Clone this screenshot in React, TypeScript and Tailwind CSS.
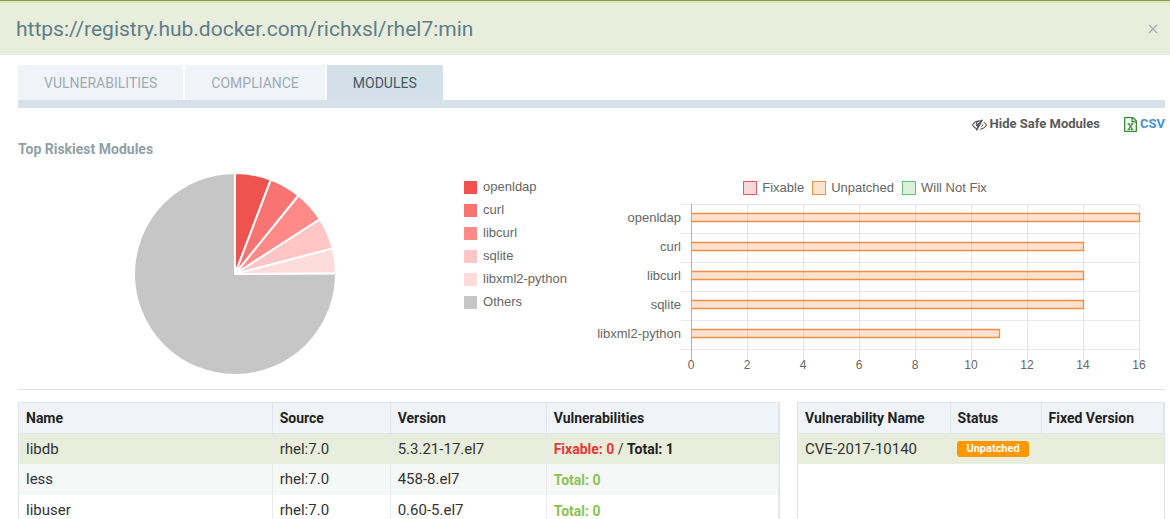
import { useState } from "react";

type Slice = { label: string; value: number; color: string };
type ModuleRow = { name: string; source: string; version: string; fixable: number; total: number };

const tabs = ["VULNERABILITIES", "COMPLIANCE", "MODULES"];

const slices: Slice[] = [
  { label: "openldap", value: 16, color: "#ef5350" },
  { label: "curl", value: 14, color: "#f77472" },
  { label: "libcurl", value: 14, color: "#ff8a87" },
  { label: "sqlite", value: 14, color: "#ffc6c5" },
  { label: "libxml2-python", value: 11, color: "#ffdcdc" },
  { label: "Others", value: 208, color: "#c6c6c6" },
];

const barLegend = [
  { label: "Fixable", box: "border-[#dc5e60] bg-[#f8d7d8]" },
  { label: "Unpatched", box: "border-[#f0914a] bg-[#fde2cf]" },
  { label: "Will Not Fix", box: "border-[#6cbf73] bg-[#daf0db]" },
];

const modules: ModuleRow[] = [
  { name: "libdb", source: "rhel:7.0", version: "5.3.21-17.el7", fixable: 0, total: 1 },
  { name: "less", source: "rhel:7.0", version: "458-8.el7", fixable: 0, total: 0 },
  { name: "libuser", source: "rhel:7.0", version: "0.60-5.el7", fixable: 0, total: 0 },
];

function EyeSlashIcon() {
  return (
    <svg viewBox="0 0 1792 1792" className="size-[15px]" fill="currentColor" aria-hidden="true">
      <path d="M555 1335l78-141q-87-63-136-159t-49-203q0-121 61-225-229 117-381 353 167 258 427 375zm389-759q0-20-14-34t-34-14q-125 0-214.5 89.5t-89.5 214.5q0 20 14 34t34 14 34-14 14-34q0-86 61-147t147-61q20 0 34-14t14-34zm363-191q0 7-1 9-106 189-316 567t-315 566l-49 89q-10 16-28 16-12 0-134-70-16-10-16-28 0-12 44-87-143-65-263.5-173t-208.5-245q-20-31-20-69t20-69q153-235 380-371t496-136q89 0 180 17l54-97q10-16 28-16 5 0 18 6t31 15.5 33 18.5 31.5 18.5 19.5 11.5q16 10 16 27zm37 447q0 139-79 253.5t-209 164.5l280-502q8 45 8 84zm448 128q0 35-20 69-39 64-109 145-150 172-347.5 267t-419.5 95l74-132q212-18 392.5-137t301.5-307q-115-179-282-294l63-112q95 64 182.5 153t144.5 184q20 34 20 69z" />
    </svg>
  );
}

function ExcelIcon() {
  return (
    <svg viewBox="128 0 1536 1792" className="h-[15px] w-[13px]" fill="currentColor" stroke="currentColor" strokeWidth="40" aria-hidden="true">
      <path d="M1596 380q28 28 48 76t20 88v1152q0 40-28 68t-68 28h-1344q-40 0-68-28t-28-68v-1600q0-40 28-68t68-28h896q40 0 88 20t76 48zm-444-244v376h376q-10-29-22-41l-313-313q-12-12-41-22zm384 1528v-1024h-416q-40 0-68-28t-28-68v-416h-768v1536h1280zm-979-234v106h281v-106h-75l103-161q5-7 10-16.5t7.5-13.5 3.5-4h2q1 4 5 10 2 4 4.5 7.5t6 8 6.5 8.5l107 161h-76v106h291v-106h-68l-192-273 195-282h67v-107h-279v107h74l-103 159q-4 7-10 16.5t-9 13.5l-2 3h-2q-1-4-5-10-6-11-17-23l-106-159h76v-107h-290v107h68l189 272-194 283h-68z" />
    </svg>
  );
}

function PieChart() {
  const total = slices.reduce((sum, s) => sum + s.value, 0);
  const point = (v: number) => {
    const angle = (v / total) * Math.PI * 2;
    return `${101 + 101 * Math.sin(angle)} ${101 - 101 * Math.cos(angle)}`;
  };
  let start = 0;

  return (
    <svg viewBox="0 0 202 202" className="size-[202px] shrink-0" role="img" aria-label="Top Riskiest Modules">
      {slices.map((s) => {
        const from = start;
        start += s.value;
        const large = s.value > total / 2 ? 1 : 0;
        return (
          <path
            key={s.label}
            d={`M101 101L${point(from)}A101 101 0 ${large} 1 ${point(start)}Z`}
            fill={s.color}
            stroke="#fff"
            strokeWidth="2"
          />
        );
      })}
    </svg>
  );
}

function BarChart() {
  const bars = slices.slice(0, 5);
  const ticks = [0, 2, 4, 6, 8, 10, 12, 14, 16];

  return (
    <svg viewBox="0 0 556 172" className="h-[172px] w-[556px]" fontSize="13" fill="#666">
      {[0, 1, 2, 3, 4, 5].map((i) => (
        <path key={i} d={`M88 ${1.5 + i * 29}H547`} stroke="#e8e8e8" />
      ))}
      {ticks.map((t) => (
        <g key={t}>
          <path d={`M${98.5 + t * 28} 1V157`} stroke={t === 0 ? "#b0b0b0" : "#e5e5e5"} />
          <text x={98 + t * 28} y="166" textAnchor="middle" fontSize="12">
            {t}
          </text>
        </g>
      ))}
      {bars.map((b, i) => (
        <g key={b.label}>
          <text x="88" y={19 + i * 29} textAnchor="end">
            {b.label}
          </text>
          <path
            d={`M98.5 ${10.5 + i * 29}h${b.value * 28}v8h-${b.value * 28}`}
            fill="#ff8c3c"
            fillOpacity="0.25"
            stroke="#ee8f49"
            strokeWidth="1.3"
          />
        </g>
      ))}
    </svg>
  );
}

export default function App() {
  const [activeTab, setActiveTab] = useState("MODULES");
  const [hideSafe, setHideSafe] = useState(false);
  const [selected, setSelected] = useState("libdb");

  const rows = hideSafe ? modules.filter((m) => m.total > 0) : modules;
  const th = "border-r border-b border-[#dfe5e9] px-[7px] text-left text-sm font-bold";
  const td = "border-r border-[#e6eaec] px-[7px]";

  return (
    <div className="flex h-screen flex-col overflow-hidden bg-white font-['Roboto',sans-serif] text-[15px] text-[#333]">
      <header className="flex h-[55px] shrink-0 items-center justify-between border-t border-[#89956b] bg-[#e9eedc] pt-[2px] pr-3 pl-4 shadow-[inset_0_2px_0_#dce8a8]">
        <h1 className="pt-[2px] text-[21px] text-[#607d8b]">https://registry.hub.docker.com/richxsl/rhel7:min</h1>
        <button aria-label="Close" className="flex h-5 w-[10px] items-center justify-center text-[#a3adb5]">
          <svg viewBox="0 0 10 10" className="size-[10px]" stroke="currentColor" strokeWidth="1.2">
            <path d="M1 1L9 9M9 1L1 9" />
          </svg>
        </button>
      </header>

      <main className="flex min-h-0 flex-1 flex-col pt-[10px] pr-[5px] pl-[18px]">
        <nav className="flex gap-[2px] border-b-8 border-[#d7e1e9]">
          {tabs.map((tab) => (
            <button
              key={tab}
              onClick={() => setActiveTab(tab)}
              className={`h-[35px] px-[26px] text-sm ${
                activeTab === tab ? "bg-[#d4e0e7] text-[#455a64]" : "bg-[#f0f4f9] text-[#9eabb6]"
              }`}
            >
              {tab}
            </button>
          ))}
        </nav>

        <div className="flex h-8 items-center justify-end gap-6 text-[13px] font-bold">
          <button onClick={() => setHideSafe(!hideSafe)} className="flex items-center gap-[3px] text-[#5a5a5a]">
            <EyeSlashIcon />
            Hide Safe Modules
          </button>
          <a href="#csv" className="flex items-center gap-[3px] text-[#4a90d9]">
            <span className="text-[#2e8b2e]">
              <ExcelIcon />
            </span>
            CSV
          </a>
        </div>

        <h2 className="text-sm leading-[18px] font-bold text-[#90a0a5]">Top Riskiest Modules</h2>

        <section className="flex h-[232px] shrink-0 justify-between border-b border-[#dfe3e4] pt-[15px] pr-4 font-['Liberation_Sans',sans-serif] text-[13px] text-[#666]">
          <div className="flex flex-1 justify-center gap-32 pl-[90px]">
            <PieChart />
            <ul className="flex flex-col gap-[3px] pt-1">
              {slices.map((s) => (
                <li key={s.label} className="flex h-5 items-center gap-[6px]">
                  <span className="size-[13px]" style={{ backgroundColor: s.color }} />
                  {s.label}
                </li>
              ))}
            </ul>
          </div>
          <div className="flex flex-col">
            <ul className="flex h-[30px] items-center justify-center gap-2 pr-3">
              {barLegend.map((item) => (
                <li key={item.label} className="flex items-center gap-[5px]">
                  <span className={`size-[14px] border ${item.box}`} />
                  {item.label}
                </li>
              ))}
            </ul>
            <BarChart />
          </div>
        </section>

        <section className="flex min-h-0 flex-1 gap-[17px] overflow-hidden pt-3">
          <div className="flex-[27] border border-b-0 border-[#dfe5e9]">
            <table className="w-full table-fixed border-collapse">
              <thead>
                <tr className="h-[30px] bg-[#f0f4f9] text-[#222]">
                  <th className={`w-1/3 ${th}`}>Name</th>
                  <th className={`w-[118px] ${th}`}>Source</th>
                  <th className={`w-[156px] ${th}`}>Version</th>
                  <th className={th}>Vulnerabilities</th>
                </tr>
              </thead>
              <tbody>
                {rows.map((m) => (
                  <tr
                    key={m.name}
                    onClick={() => setSelected(m.name)}
                    className={`h-[31px] ${selected === m.name ? "bg-[#e9eedc]" : "even:bg-[#f6f8f8]"}`}
                  >
                    <td className={td}>{m.name}</td>
                    <td className={td}>{m.source}</td>
                    <td className={td}>{m.version}</td>
                    <td className={`text-sm ${td}`}>
                      {m.total > 0 ? (
                        <>
                          <b className="text-[#e53935]">Fixable: {m.fixable}</b> / <b className="text-[#222]">Total: {m.total}</b>
                        </>
                      ) : (
                        <b className="text-[#8bc34a]">Total: {m.total}</b>
                      )}
                    </td>
                  </tr>
                ))}
              </tbody>
            </table>
          </div>

          <div className="flex-[13] border border-b-0 border-[#dfe5e9]">
            <table className="w-full table-fixed border-collapse">
              <thead>
                <tr className="h-[30px] bg-[#f0f4f9] text-[#222]">
                  <th className={`w-[152px] ${th}`}>Vulnerability Name</th>
                  <th className={`w-[91px] ${th}`}>Status</th>
                  <th className={th}>Fixed Version</th>
                </tr>
              </thead>
              <tbody>
                <tr className="h-[31px] bg-[#e9eedc]">
                  <td className="px-[7px]">CVE-2017-10140</td>
                  <td className="px-[7px]">
                    <span className="block h-4 w-[72px] rounded-[3px] bg-[#ff9800] text-center text-[11px] leading-4 font-bold text-white">
                      Unpatched
                    </span>
                  </td>
                  <td className="px-[7px]"></td>
                </tr>
              </tbody>
            </table>
          </div>
        </section>
      </main>
    </div>
  );
}
